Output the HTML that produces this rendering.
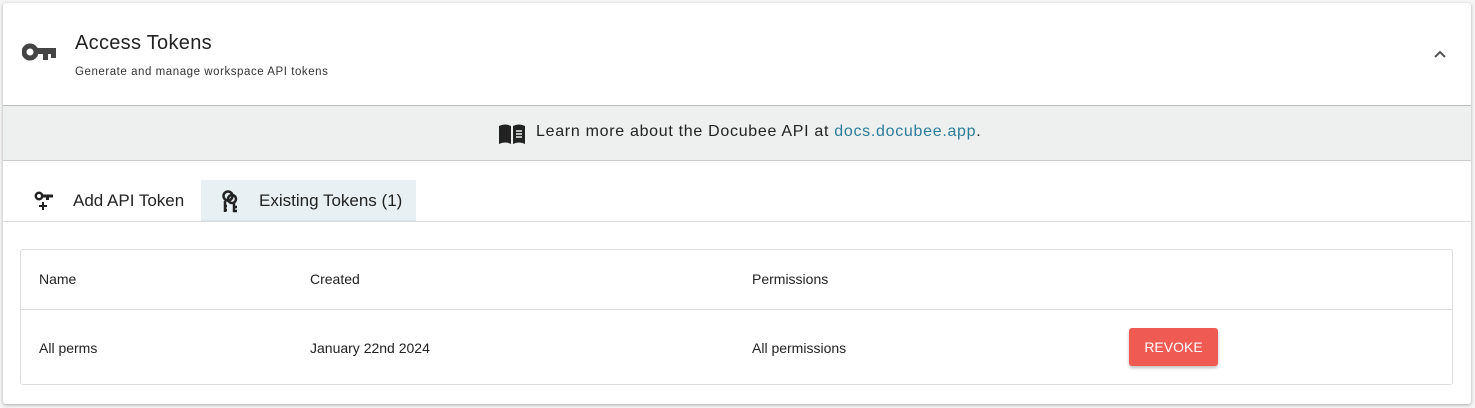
<!DOCTYPE html>
<html><head><style>
*{box-sizing:border-box;margin:0;padding:0}
body{width:1475px;height:408px;background:#f4f4f4;font-family:"Liberation Sans",sans-serif;color:#222;position:relative;overflow:hidden}
.card{position:absolute;left:3px;top:3px;width:1468px;height:401px;background:#fff;box-shadow:0 1px 3px rgba(0,0,0,.3);border-radius:3px}
.abs{position:absolute}
</style></head><body>
<div class="card">
  <svg class="abs" style="left:19px;top:38px" width="36" height="22" viewBox="0 0 36 22"><circle cx="8" cy="11" r="6" fill="none" stroke="#444" stroke-width="5"/><rect x="13" y="7" width="21" height="6" fill="#444"/><rect x="21" y="11" width="5" height="8" fill="#444"/><rect x="29" y="11" width="5" height="6" fill="#444"/></svg>
  <div class="abs" style="left:72px;top:29px;font-size:20px;color:#222;letter-spacing:.3px">Access Tokens</div>
  <div class="abs" style="left:72px;top:63px;font-size:11.5px;color:#333;letter-spacing:.55px">Generate and manage workspace API tokens</div>
  <svg class="abs" style="left:1431px;top:47px" width="12" height="8" viewBox="0 0 12 8"><path d="M1 7L6 2L11 7" fill="none" stroke="#555" stroke-width="2"/></svg>
  <div class="abs" style="left:0;top:102px;width:1468px;height:56px;background:#eef0ef;border-top:1px solid #bbb;border-bottom:1px solid #ccc"></div>
  <svg class="abs" style="left:495px;top:120px" width="28" height="22" viewBox="0 0 28 22"><path d="M1 3Q7 0 13 3V21Q7 18 1 21Z" fill="#222"/><path d="M15 3Q21 0 27 3V21Q21 18 15 21Z" fill="#222"/><path d="M18 8h6M18 11h6M18 14h6" stroke="#eef0ef" stroke-width="1.5"/></svg>
  <div class="abs" style="left:533px;top:120px;font-size:16px;color:#222;letter-spacing:.7px">Learn more about the Docubee API at <span style="color:#2a7d9a">docs.docubee.app</span>.</div>
  <div class="abs" style="left:198px;top:177px;width:215px;height:42px;background:#e8f0f3;border-bottom:2px solid #d6e4ea"></div>
  <div class="abs" style="left:0;top:218px;width:1468px;height:1px;background:#ddd"></div>
  <svg class="abs" style="left:31px;top:188px" width="20" height="22" viewBox="0 0 20 22"><circle cx="5" cy="5" r="3.2" fill="none" stroke="#222" stroke-width="2.5"/><rect x="8" y="3.5" width="11" height="3" fill="#222"/><rect x="12" y="5" width="3" height="4" fill="#222"/><path d="M9 11v8M5 15h8" stroke="#222" stroke-width="2"/></svg>
  <div class="abs" style="left:70px;top:188px;font-size:17px;color:#222">Add API Token</div>
  <svg class="abs" style="left:217px;top:187px" width="20" height="24" viewBox="0 0 20 24"><circle cx="8" cy="6" r="4.5" fill="none" stroke="#222" stroke-width="2.5"/><circle cx="12" cy="9" r="4" fill="none" stroke="#222" stroke-width="2.5"/><path d="M5 11v11M4 16h3M4 20h3M14 12v10M13 17h4M13 21h4" stroke="#222" stroke-width="2.5"/></svg>
  <div class="abs" style="left:256px;top:188px;font-size:17px;color:#222">Existing Tokens (1)</div>
  <div class="abs" style="left:17px;top:246px;width:1433px;height:136px;border:1px solid #ddd;border-radius:3px">
    <div class="abs" style="left:0;top:59px;width:1431px;height:1px;background:#ddd"></div>
    <div class="abs" style="left:18px;top:21px;font-size:14px">Name</div>
    <div class="abs" style="left:289px;top:21px;font-size:14px">Created</div>
    <div class="abs" style="left:731px;top:21px;font-size:14px">Permissions</div>
    <div class="abs" style="left:18px;top:90px;font-size:14px">All perms</div>
    <div class="abs" style="left:289px;top:90px;font-size:14px">January 22nd 2024</div>
    <div class="abs" style="left:731px;top:90px;font-size:14px">All permissions</div>
    <div class="abs" style="left:1108px;top:78px;width:89px;height:38px;background:#ef5a52;border-radius:3px;box-shadow:0 2px 3px rgba(0,0,0,.25);color:#fff;font-size:14px;text-align:center;line-height:38px">REVOKE</div>
  </div>
</div>
</body></html>
